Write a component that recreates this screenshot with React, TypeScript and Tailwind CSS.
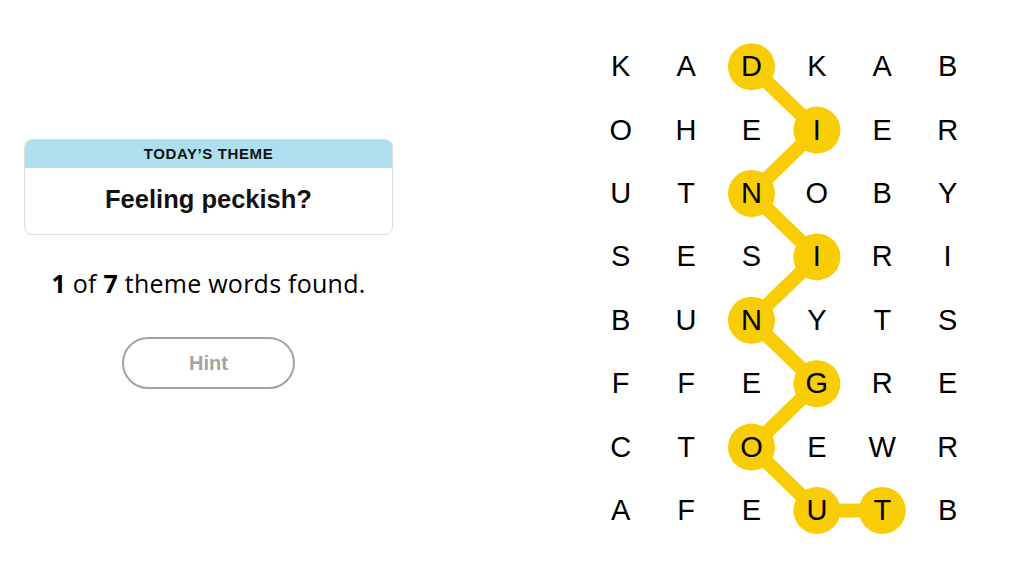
import React from "react";

const rows = [
  "KADKAB",
  "OHEIER",
  "UTNOBY",
  "SESIRI",
  "BUNYTS",
  "FFEGRE",
  "CTOEWR",
  "AFEUTB",
];

// spangram path, [row, col]
const path: [number, number][] = [
  [0, 2],
  [1, 3],
  [2, 2],
  [3, 3],
  [4, 2],
  [5, 3],
  [6, 2],
  [7, 3],
  [7, 4],
];

const CW = 65.4;
const CH = 63.4;
const YELLOW = "#f8cd05";

function ThemeCard() {
  return (
    <div className="w-full overflow-hidden rounded-lg border border-[#dcdcdc] bg-white">
      <div className="flex h-[28px] items-center justify-center bg-[#aedfee] text-[15px] font-semibold tracking-[0.04em] text-[#121212]">
        TODAY’S THEME
      </div>
      <div className="flex h-[66px] items-center justify-center pb-1 text-[25.5px] font-bold text-[#121212]">
        Feeling peckish?
      </div>
    </div>
  );
}

function Board() {
  const pts = path.map(([r, c]) => `${c * CW + CW / 2},${r * CH + CH / 2}`).join(" ");
  return (
    <div className="relative">
      <svg
        className="absolute left-0 top-0"
        width={CW * 6}
        height={CH * 8}
        viewBox={`0 0 ${CW * 6} ${CH * 8}`}
      >
        <polyline points={pts} fill="none" stroke={YELLOW} strokeWidth={14} strokeLinejoin="round" />
        {path.map(([r, c]) => (
          <circle key={`${r}-${c}`} cx={c * CW + CW / 2} cy={r * CH + CH / 2} r={23.5} fill={YELLOW} />
        ))}
      </svg>
      <div className="relative grid grid-cols-[repeat(6,65.4px)] grid-rows-[repeat(8,63.4px)]">
        {rows.map((row, r) =>
          row.split("").map((ch, c) => (
            <div
              key={`${r}-${c}`}
              className="flex items-center justify-center text-[29px] leading-none text-black"
            >
              {ch}
            </div>
          ))
        )}
      </div>
    </div>
  );
}

export default function App() {
  return (
    <div className="flex h-[576px] w-[1024px] bg-white font-['Liberation_Sans',Arial,sans-serif]">
      <div className="flex w-[417px] flex-col items-center px-6 pt-[139px]">
        <ThemeCard />
        <p className="mt-[32px] font-['Open_Sans',sans-serif] text-[25px] leading-[32px] tracking-[0.01em] text-black">
          <b>1</b> of <b>7</b> theme words found.
        </p>
        <button className="mt-[38px] h-[52px] w-[173px] rounded-full border-2 border-[#a3a3a3] text-[20px] font-bold text-[#a3a3a3]">
          Hint
        </button>
      </div>
      <div className="ml-[171px] pt-[35px]">
        <Board />
      </div>
    </div>
  );
}
